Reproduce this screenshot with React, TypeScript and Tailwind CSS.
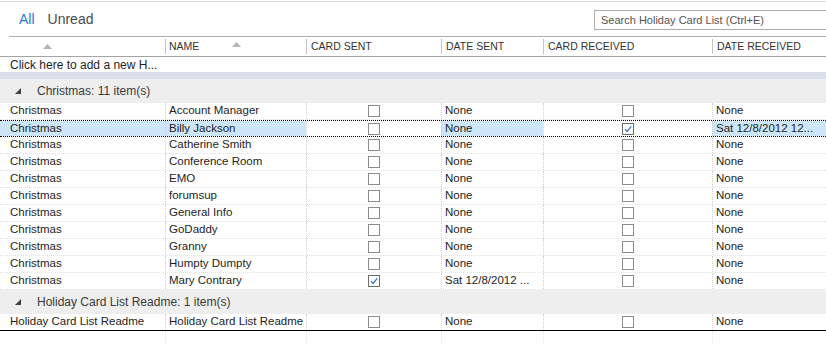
import React from "react";

type Row = {
  cat: string;
  name: string;
  sent: boolean;
  dateSent: string;
  received: boolean;
  dateReceived: string;
  selected?: boolean;
};

const christmas: Row[] = [
  { cat: "Christmas", name: "Account Manager", sent: false, dateSent: "None", received: false, dateReceived: "None" },
  { cat: "Christmas", name: "Billy Jackson", sent: false, dateSent: "None", received: true, dateReceived: "Sat 12/8/2012 12...", selected: true },
  { cat: "Christmas", name: "Catherine Smith", sent: false, dateSent: "None", received: false, dateReceived: "None" },
  { cat: "Christmas", name: "Conference Room", sent: false, dateSent: "None", received: false, dateReceived: "None" },
  { cat: "Christmas", name: "EMO", sent: false, dateSent: "None", received: false, dateReceived: "None" },
  { cat: "Christmas", name: "forumsup", sent: false, dateSent: "None", received: false, dateReceived: "None" },
  { cat: "Christmas", name: "General Info", sent: false, dateSent: "None", received: false, dateReceived: "None" },
  { cat: "Christmas", name: "GoDaddy", sent: false, dateSent: "None", received: false, dateReceived: "None" },
  { cat: "Christmas", name: "Granny", sent: false, dateSent: "None", received: false, dateReceived: "None" },
  { cat: "Christmas", name: "Humpty Dumpty", sent: false, dateSent: "None", received: false, dateReceived: "None" },
  { cat: "Christmas", name: "Mary Contrary", sent: true, dateSent: "Sat 12/8/2012 ...", received: false, dateReceived: "None" },
];

const readme: Row[] = [
  { cat: "Holiday Card List Readme", name: "Holiday Card List Readme", sent: false, dateSent: "None", received: false, dateReceived: "None" },
];

function SortArrow() {
  return (
    <svg width="9" height="5" viewBox="0 0 9 5" className="block">
      <polygon points="4.5,0 9,5 0,5" fill="#b4b4b4" />
    </svg>
  );
}

function Check({ on }: { on: boolean }) {
  return (
    <div
      className={
        "w-[12px] h-[12px] bg-white border flex items-center justify-center " +
        (on ? "border-[#6c6c6c]" : "border-[#8c8c8c]")
      }
    >
      {on && (
        <svg width="10" height="10" viewBox="0 0 10 10">
          <path d="M2 5.2 L4.2 7.4 L8.2 2.4" fill="none" stroke="#4277c0" strokeWidth="1.4" />
        </svg>
      )}
    </div>
  );
}

function DataRow({ r, last }: { r: Row; last?: boolean }) {
  const bg = r.selected ? "bg-[#cde6f7]" : "";
  const line = r.selected
    ? "border-y border-dotted border-black"
    : last
    ? "border-b border-black"
    : "border-b border-dotted border-[#e2e2e2]";
  const sep = "border-l border-dotted border-[#cfcfcf]";
  return (
    <div className={"flex h-[17px] text-[11.5px] text-[#1e1e1e] leading-none " + line}>
      <div className={"w-[165px] shrink-0 pl-[10px] flex items-center " + bg}>{r.cat}</div>
      <div className={"w-[141px] shrink-0 pl-[3px] flex items-center " + sep + " " + bg}>{r.name}</div>
      <div className={"w-[135px] shrink-0 flex items-center justify-center " + sep}>
        <Check on={r.sent} />
      </div>
      <div className={"w-[102px] shrink-0 pl-[3px] flex items-center whitespace-nowrap overflow-hidden " + sep + " " + bg}>
        {r.dateSent}
      </div>
      <div className={"w-[169px] shrink-0 flex items-center justify-center " + sep}>
        <Check on={r.received} />
      </div>
      <div className={"flex-1 pl-[3px] flex items-center whitespace-nowrap overflow-hidden " + sep + " " + bg}>
        {r.dateReceived}
      </div>
    </div>
  );
}

function GroupHeader({ label }: { label: string }) {
  return (
    <div className="h-[24px] bg-[#eeeeee] flex items-center pl-[15px] gap-[16px] text-[12px] text-[#3a3a3a]">
      <svg width="6" height="6" viewBox="0 0 6 6" className="block">
        <polygon points="6,0 6,6 0,6" fill="#404040" />
      </svg>
      <span>{label}</span>
    </div>
  );
}

export default function App() {
  const hsep = "border-l border-[#c4c4c4]";
  return (
    <div className="w-[826px] h-[344px] overflow-hidden bg-white font-['Liberation_Sans',Arial,sans-serif]">
      <div className="h-px mt-px bg-[#dcdcdc]" />

      {/* view tabs + search */}
      <div className="h-[35px] flex items-start ml-[9px] border-b border-[#a9b0b8]">
        <div className="flex gap-[13px] pl-[10px] pt-[10px] text-[14px] leading-none">
          <span className="text-[#2b7bd4]">All</span>
          <span className="text-[#4a4a4a]">Unread</span>
        </div>
        <div className="ml-auto mt-[8px] w-[232px] h-[20px] border border-r-0 border-[#ababab] flex items-center pl-[6px] text-[11px] text-[#555]">
          Search Holiday Card List (Ctrl+E)
        </div>
      </div>

      {/* column headers */}
      <div className="flex h-[20px] border-b border-[#a5a5a5] text-[10.5px] text-[#333] leading-none">
        <div className="w-[165px] shrink-0 flex items-center pl-[43px]">
          <SortArrow />
        </div>
        <div className="w-[141px] shrink-0 flex items-center py-[2px]">
          <div className={"h-full flex items-center pl-[3px] w-full " + hsep}>
            <span>NAME</span>
            <span className="ml-[33px] -mt-[4px]">
              <SortArrow />
            </span>
          </div>
        </div>
        <div className="w-[135px] shrink-0 flex py-[2px]">
          <div className={"h-full flex items-center pl-[4px] w-full " + hsep}>CARD SENT</div>
        </div>
        <div className="w-[102px] shrink-0 flex py-[2px]">
          <div className={"h-full flex items-center pl-[4px] w-full " + hsep}>DATE SENT</div>
        </div>
        <div className="w-[169px] shrink-0 flex py-[2px]">
          <div className={"h-full flex items-center pl-[4px] w-full " + hsep}>CARD RECEIVED</div>
        </div>
        <div className="flex-1 flex py-[2px]">
          <div className={"h-full flex items-center pl-[4px] w-full " + hsep}>DATE RECEIVED</div>
        </div>
      </div>

      {/* add new row */}
      <div className="h-[15px] flex items-center pl-[10px] text-[12px] text-[#1e1e1e] leading-none">
        Click here to add a new H...
      </div>
      <div className="h-[7px] bg-[#d8dfe8]" />

      <GroupHeader label="Christmas: 11 item(s)" />
      {christmas.map((r, i) => (
        <DataRow key={i} r={r} />
      ))}

      <GroupHeader label="Holiday Card List Readme: 1 item(s)" />
      {readme.map((r, i) => (
        <DataRow key={i} r={r} last />
      ))}

      {/* empty space below: columns continue */}
      <div className="flex h-[20px]">
        <div className="w-[165px] shrink-0" />
        <div className="w-[141px] shrink-0 border-l border-dotted border-[#e4e4e4]" />
        <div className="w-[135px] shrink-0 border-l border-dotted border-[#e4e4e4]" />
        <div className="w-[102px] shrink-0 border-l border-dotted border-[#e4e4e4]" />
        <div className="w-[169px] shrink-0 border-l border-dotted border-[#e4e4e4]" />
        <div className="flex-1 border-l border-dotted border-[#e4e4e4]" />
      </div>
    </div>
  );
}
